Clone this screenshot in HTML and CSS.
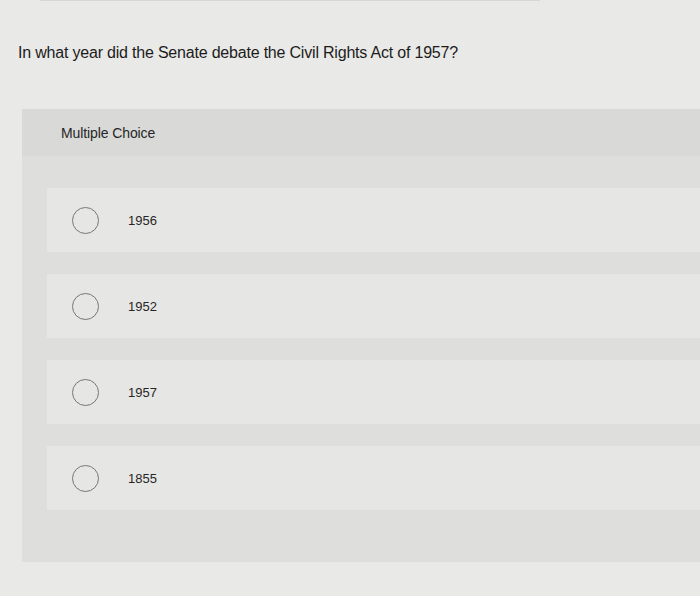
FILE: index.html
```html
<!DOCTYPE html>
<html>
<head>
<meta charset="utf-8">
<link rel="stylesheet" href="styles.css">
</head>
<body>
<div class="topline"></div>
<p class="question">In what year did the Senate debate the Civil Rights Act of 1957?</p>
<section class="panel">
  <div class="panel-head">Multiple Choice</div>
  <div class="options">
    <div class="option"><span class="radio"></span><span class="label">1956</span></div>
    <div class="option"><span class="radio"></span><span class="label">1952</span></div>
    <div class="option"><span class="radio"></span><span class="label">1957</span></div>
    <div class="option"><span class="radio"></span><span class="label">1855</span></div>
  </div>
</section>
</body>
</html>
```
FILE: styles.css
```css
html, body {
  margin: 0;
  padding: 0;
}
body {
  background: #e9e9e7;
  font-family: "Liberation Sans", Arial, sans-serif;
  color: #2a2a2a;
  width: 700px;
  height: 596px;
  overflow: hidden;
}
.topline {
  height: 1px;
  margin: 0 160px 0 40px;
  background: #d6d6d4;
}
.question {
  margin: 0;
  padding: 42px 0 0 18px;
  font-size: 16px;
  line-height: 19px;
  color: #1c1c1c;
  letter-spacing: -0.2px;
}
.panel {
  margin: 47px 0 0 22px;
  background: #dededc;
  padding-bottom: 52px;
}
.panel-head {
  background: #d9d9d7;
  height: 47px;
  padding-left: 39px;
  display: flex;
  align-items: center;
  font-size: 14px;
  color: #262626;
  letter-spacing: -0.1px;
}
.options {
  display: flex;
  flex-direction: column;
  gap: 22px;
  padding-top: 32px;
  padding-left: 25px;
}
.option {
  height: 64px;
  background: #e6e6e4;
  display: flex;
  align-items: center;
  padding-left: 25px;
}
.radio {
  width: 25px;
  height: 25px;
  border: 1.5px solid #767676;
  border-radius: 50%;
  box-sizing: content-box;
  flex: none;
}
.label {
  margin-left: 29px;
  font-size: 13px;
  color: #262626;
}
```
